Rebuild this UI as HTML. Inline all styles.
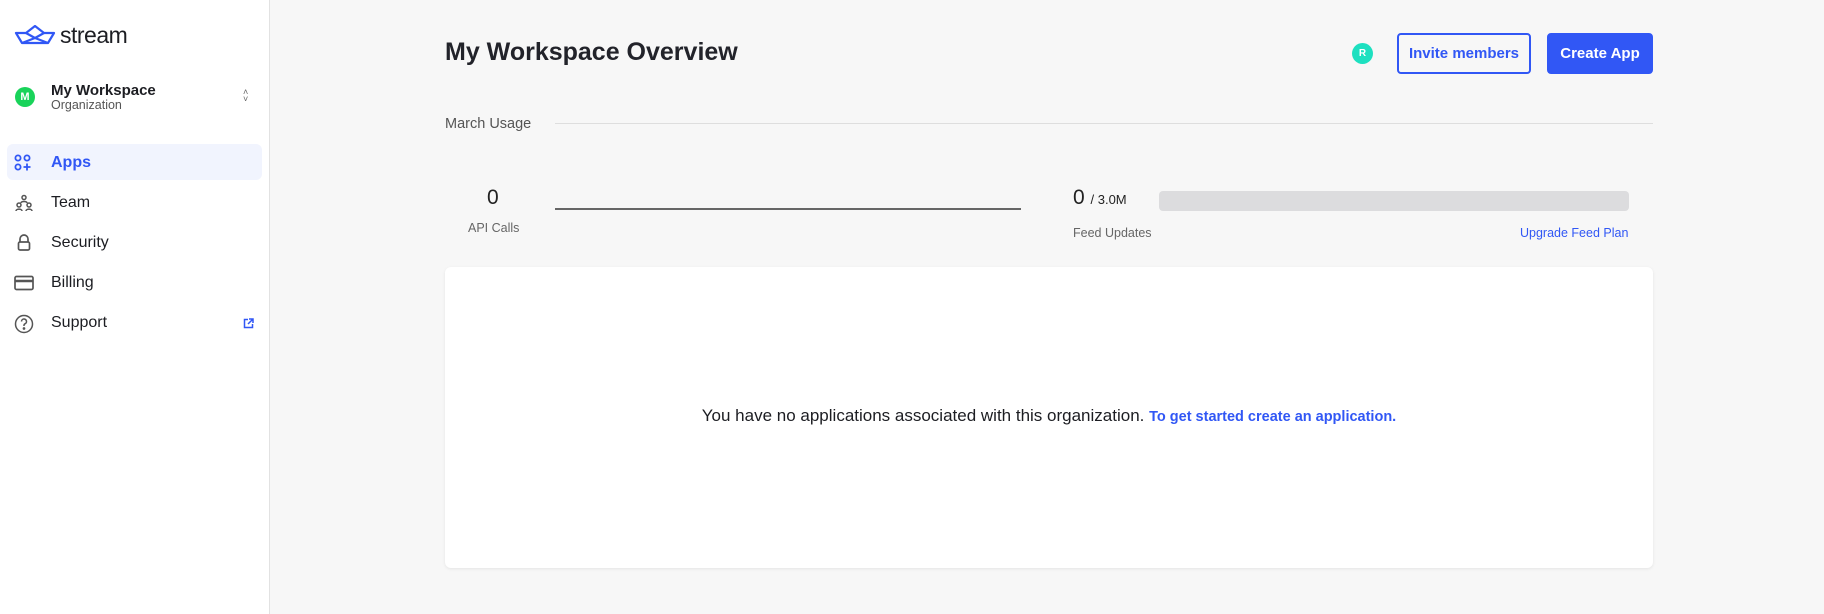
<!DOCTYPE html>
<html><head><style>
*{margin:0;padding:0;box-sizing:border-box}
body{width:1824px;height:614px;overflow:hidden;background:#f7f7f7;font-family:"Liberation Sans",sans-serif;position:relative;color:#1c1d22}
.side{position:absolute;left:0;top:0;width:270px;height:614px;background:#fff;border-right:1px solid #e2e2e2}
.a{position:absolute;white-space:nowrap}
.nav{position:absolute;left:51px;font-size:16px;color:#1c1d22}
.ico{position:absolute;left:14px}
</style></head><body>
<div class="side">
<svg class="a" style="left:14px;top:25px" width="42" height="20" viewBox="0 0 42 20" fill="none" stroke="#3157f5" stroke-width="2.2" stroke-linejoin="round"><path d="M2 8 L12 8 L21 1 L30 8 L40 8 L34 18 L8 18 Z"/><path d="M12 8 L21 13 L30 8 M8 18 L21 13 L34 18"/></svg>
<div class="a" style="left:60px;top:22px;font-size:23px;color:#1c1d22;letter-spacing:-0.5px">stream</div>
<div class="a" style="left:15px;top:87px;width:20px;height:20px;border-radius:50%;background:#19d35a;color:#fff;font-size:11px;font-weight:bold;text-align:center;line-height:20px">M</div>
<div class="a" style="left:51px;top:82px;font-size:15px;font-weight:bold">My Workspace</div>
<div class="a" style="left:51px;top:98px;font-size:12.5px;color:#555">Organization</div>
<div class="a" style="left:243px;top:89px;font-size:9px;color:#666;line-height:7px">˄<br>˅</div>
<div class="a" style="left:7px;top:144px;width:255px;height:36px;background:#f1f4fe;border-radius:6px"></div>
<svg class="ico" style="top:154px" width="18" height="18" viewBox="0 0 18 18" fill="none" stroke="#3157f5" stroke-width="1.8"><circle cx="4" cy="4" r="2.6"/><circle cx="13" cy="4" r="2.6"/><circle cx="4" cy="13" r="2.6"/><path d="M13 9.5v7M9.5 13h7"/></svg>
<div class="nav" style="top:154px;color:#3157f5;font-weight:bold">Apps</div>
<svg class="ico" style="top:194px" width="20" height="18" viewBox="0 0 20 18" fill="none" stroke="#555" stroke-width="1.5"><circle cx="10" cy="3.5" r="2"/><path d="M7 9c0-2 6-2 6 0"/><circle cx="5" cy="11" r="2"/><path d="M2 17c0-2.5 6-2.5 6 0"/><circle cx="15" cy="11" r="2"/><path d="M12 17c0-2.5 6-2.5 6 0"/></svg>
<div class="nav" style="top:194px">Team</div>
<svg class="ico" style="top:234px;left:16px" width="16" height="18" viewBox="0 0 16 18" fill="none" stroke="#555" stroke-width="1.7"><path d="M4 8V5a4 4 0 0 1 8 0v3"/><rect x="2.5" y="8" width="11" height="8" rx="1.5"/></svg>
<div class="nav" style="top:234px">Security</div>
<svg class="ico" style="top:275px" width="20" height="16" viewBox="0 0 20 16" fill="none" stroke="#555" stroke-width="1.7"><rect x="1" y="1.5" width="18" height="13" rx="1.5"/><path d="M1 6h18" stroke-width="2.5"/></svg>
<div class="nav" style="top:274px">Billing</div>
<svg class="ico" style="top:314px" width="20" height="20" viewBox="0 0 20 20" fill="none" stroke="#555" stroke-width="1.5"><circle cx="10" cy="10" r="8.5"/><path d="M7.5 7.5a2.5 2.5 0 1 1 3.5 2.3c-.7.3-1 .8-1 1.5v.7"/><circle cx="10" cy="14.5" r=".6" fill="#555"/></svg>
<div class="nav" style="top:314px">Support</div>
<svg class="a" style="left:243px;top:318px" width="11" height="11" viewBox="0 0 11 11" fill="none" stroke="#3157f5" stroke-width="1.5"><path d="M5 1.5H1.5v8h8V6"/><path d="M6 1h4v4M10 1L5 6"/></svg>
</div>

<div class="a" style="left:445px;top:38px;font-size:25px;font-weight:bold;color:#22232a">My Workspace Overview</div>
<div class="a" style="left:1352px;top:43px;width:21px;height:21px;border-radius:50%;background:#1de0c0;color:#fff;font-size:10px;font-weight:bold;text-align:center;line-height:21px">R</div>
<div class="a" style="left:1397px;top:33px;width:134px;height:41px;border:2px solid #3157f5;border-radius:4px;color:#3157f5;font-size:15px;font-weight:bold;text-align:center;line-height:37px">Invite members</div>
<div class="a" style="left:1547px;top:33px;width:106px;height:41px;background:#3157f5;border-radius:4px;color:#fff;font-size:15px;font-weight:bold;text-align:center;line-height:41px">Create App</div>

<div class="a" style="left:445px;top:116px;font-size:14.5px;color:#555">March Usage</div>
<div class="a" style="left:555px;top:123px;width:1098px;height:1px;background:#dedede"></div>

<div class="a" style="left:487px;top:186px;font-size:21px;color:#222">0</div>
<div class="a" style="left:468px;top:221px;font-size:12.5px;color:#666">API Calls</div>
<div class="a" style="left:555px;top:208px;width:466px;height:2px;background:#666"></div>

<div class="a" style="left:1073px;top:186px;font-size:21px;color:#222">0 <span style="font-size:13px">/ 3.0M</span></div>
<div class="a" style="left:1159px;top:191px;width:470px;height:20px;background:#dcdcde;border-radius:4px"></div>
<div class="a" style="left:1073px;top:226px;font-size:12.5px;color:#666">Feed Updates</div>
<div class="a" style="left:1520px;top:226px;font-size:12.5px;color:#3157f5">Upgrade Feed Plan</div>

<div class="a" style="left:445px;top:267px;width:1208px;height:301px;background:#fff;border-radius:6px;box-shadow:0 1px 3px rgba(0,0,0,.08)"></div>
<div class="a" style="left:445px;width:1208px;top:406px;text-align:center;font-size:17px;color:#1c1d22">You have no applications associated with this organization. <span style="color:#3157f5;font-weight:bold;font-size:14.5px">To get started create an application.</span></div>
</body></html>
